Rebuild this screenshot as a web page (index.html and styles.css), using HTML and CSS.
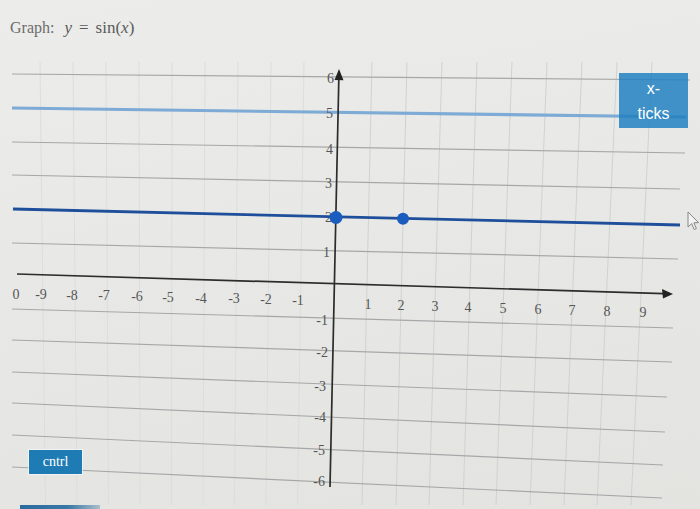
FILE: index.html
```html
<!DOCTYPE html>
<html lang="en">
<head>
<meta charset="utf-8">
<title>Graph: y = sin(x)</title>
<link rel="stylesheet" href="styles.css">
</head>
<body>
<header class="title">
  <span class="label">Graph:</span>
  <span class="math"><i>y</i><span class="op">=</span>sin(<i>x</i>)</span>
</header>
<main class="graph">
  <svg class="plot" width="700" height="449" viewBox="0 60 700 449" xmlns="http://www.w3.org/2000/svg">
    <g class="vgrid-neg">
      <line x1="304" y1="62" x2="297.5" y2="505"/>
      <line x1="271" y1="62" x2="266" y2="505"/>
      <line x1="238" y1="62" x2="234.5" y2="505"/>
      <line x1="205" y1="62" x2="203" y2="505"/>
      <line x1="172" y1="62" x2="171.5" y2="505"/>
      <line x1="139" y1="62" x2="140" y2="505"/>
      <line x1="106" y1="62" x2="108.5" y2="505"/>
      <line x1="73" y1="62" x2="77" y2="505"/>
      <line x1="40" y1="62" x2="45.5" y2="505"/>
    </g>
    <g class="vgrid">
      <line x1="372" y1="62" x2="362" y2="505"/>
      <line x1="407" y1="62" x2="396" y2="505"/>
      <line x1="442" y1="62" x2="429" y2="505"/>
      <line x1="477" y1="62" x2="463" y2="505"/>
      <line x1="512" y1="62" x2="496" y2="505"/>
      <line x1="547" y1="62" x2="530" y2="505"/>
      <line x1="582" y1="62" x2="564" y2="505"/>
      <line x1="617" y1="62" x2="597" y2="505"/>
      <line x1="652" y1="62" x2="631" y2="505"/>
    </g>
    <g class="hgrid">
      <line x1="12" y1="74" x2="690" y2="80"/>
      <line x1="12" y1="142" x2="685" y2="153"/>
      <line x1="12" y1="175" x2="680" y2="189"/>
      <line x1="12" y1="243" x2="678" y2="259"/>
      <line x1="12" y1="309" x2="673" y2="328"/>
      <line x1="12" y1="340" x2="672" y2="362"/>
      <line x1="12" y1="372" x2="667" y2="397"/>
      <line x1="12" y1="403" x2="665" y2="432"/>
      <line x1="12" y1="435" x2="663" y2="465"/>
      <line x1="12" y1="467" x2="662" y2="498"/>
    </g>
    <line class="line-light" x1="12" y1="108" x2="686" y2="117"/>
    <g class="axes">
      <line x1="17" y1="274" x2="664" y2="293.7"/>
      <polygon points="673,294 662,289 663,298.5"/>
      <line x1="330" y1="487" x2="338.8" y2="80"/>
      <polygon points="339,69 334.5,80 343.5,80.2"/>
    </g>
    <g class="xlabels">
      <text x="16" y="299">0</text>
      <text x="41" y="299">-9</text>
      <text x="72" y="300">-8</text>
      <text x="104" y="300">-7</text>
      <text x="137" y="301">-6</text>
      <text x="168" y="302">-5</text>
      <text x="201" y="303">-4</text>
      <text x="234" y="303">-3</text>
      <text x="266" y="304">-2</text>
      <text x="298" y="305">-1</text>
      <text x="368" y="309">1</text>
      <text x="401" y="310">2</text>
      <text x="435" y="311">3</text>
      <text x="468" y="312">4</text>
      <text x="503" y="313">5</text>
      <text x="538" y="314">6</text>
      <text x="572" y="315">7</text>
      <text x="607" y="316">8</text>
      <text x="643" y="317">9</text>
    </g>
    <g class="ylabels">
      <text x="334" y="83">6</text>
      <text x="333" y="118">5</text>
      <text x="333" y="154">4</text>
      <text x="332" y="188">3</text>
      <text x="332" y="222">2</text>
      <text x="330" y="257">1</text>
      <text x="328" y="325">-1</text>
      <text x="328" y="357">-2</text>
      <text x="326" y="391">-3</text>
      <text x="326" y="422">-4</text>
      <text x="325" y="455">-5</text>
      <text x="325" y="486">-6</text>
    </g>
    <line class="line-dark" x1="13" y1="209" x2="680" y2="225"/>
    <circle class="dot" cx="336" cy="217.5" r="6.5"/>
    <circle class="dot" cx="403" cy="218.8" r="6"/>
    <path class="cursor" d="M688 212 L688 227 L691.6 223.6 L694.2 229.5 L696.4 228.5 L693.8 222.8 L698.5 222.6 Z"/>
  </svg>
  <button class="btn btn-ticks" type="button">x-ticks</button>
  <button class="btn btn-cntrl" type="button">cntrl</button>
  <div class="btn-peek"></div>
</main>
</body>
</html>
```

FILE: styles.css
```css
html, body {
  margin: 0;
  padding: 0;
}

body {
  width: 700px;
  height: 509px;
  overflow: hidden;
  background: linear-gradient(170deg, #ececea 0%, #e8e9e6 45%, #e3e4e0 100%);
  font-family: "Liberation Serif", "Times New Roman", serif;
}

.title {
  height: 60px;
  box-sizing: border-box;
  padding: 18px 0 0 10px;
  font-size: 16px;
  line-height: 20px;
  color: #6c6c6c;
  display: flex;
  align-items: baseline;
}

.title .label {
  margin-right: 10px;
}

.title .math {
  font-size: 17px;
  color: #5a5a5a;
}

.title .math i {
  font-style: italic;
}

.title .op {
  margin: 0 7px;
}

.graph {
  position: relative;
  width: 700px;
  height: 449px;
}

.plot {
  display: block;
}

.vgrid line {
  stroke: #d0d2d1;
  stroke-width: 1;
}

.vgrid-neg line {
  stroke: #dcdedc;
  stroke-width: 1;
}

.hgrid line {
  stroke: #a6a8a8;
  stroke-width: 1.2;
}

.line-light {
  stroke: #7eaad6;
  stroke-width: 3.2;
}

.line-dark {
  stroke: #1f4f9b;
  stroke-width: 2.8;
}

.dot {
  fill: #1b5cbf;
}

.axes line {
  stroke: #2c2c2c;
  stroke-width: 1.7;
}

.axes polygon {
  fill: #222;
}

.xlabels text,
.ylabels text {
  font-family: "Liberation Serif", "Times New Roman", serif;
  font-size: 14px;
  fill: #555555;
}

.xlabels text {
  text-anchor: middle;
}

.ylabels text {
  text-anchor: end;
}

.cursor {
  fill: #f3f3f3;
  stroke: #7a7a7a;
  stroke-width: 0.9;
  stroke-linejoin: round;
}

.btn {
  position: absolute;
  border: 0;
  margin: 0;
  padding: 0;
  color: #ffffff;
  cursor: pointer;
}

.btn-ticks {
  left: 619px;
  top: 13px;
  width: 69px;
  height: 55px;
  padding: 0 14px;
  background: rgba(26, 126, 192, 0.82);
  font-family: "Liberation Sans", Arial, sans-serif;
  font-size: 16px;
  line-height: 25px;
  text-align: center;
}

.btn-cntrl {
  left: 29px;
  top: 390px;
  width: 53px;
  height: 24px;
  background: #1f7bb3;
  box-shadow: 0 0 0 1px rgba(255, 255, 255, 0.55);
  font-family: "Liberation Serif", "Times New Roman", serif;
  font-size: 14px;
  line-height: 24px;
  text-align: center;
}

.btn-peek {
  position: absolute;
  left: 20px;
  top: 445px;
  width: 80px;
  height: 6px;
  background: linear-gradient(90deg, #2a6c9e 0%, #3a78a6 60%, rgba(80, 130, 170, 0.4) 100%);
}
```
